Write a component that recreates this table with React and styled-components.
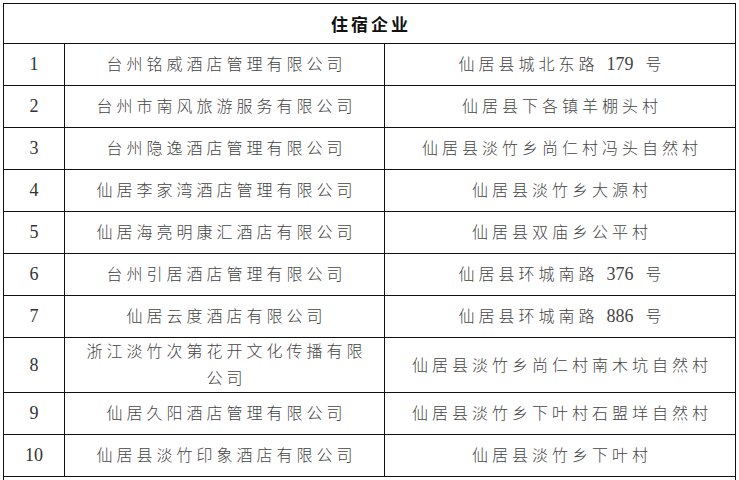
import React from "react";
import styled, { createGlobalStyle } from "styled-components";

const GlobalStyle = createGlobalStyle`
	html, body {
		margin: 0;
		padding: 0;
		background: #ffffff;
		overflow: hidden;
	}
	body {
		font-family: "Liberation Serif", "Noto Sans CJK SC", serif;
	}
`;

const companies = [
	{ name: "台州铭威酒店管理有限公司", address: "仙居县城北东路 179 号" },
	{ name: "台州市南风旅游服务有限公司", address: "仙居县下各镇羊棚头村" },
	{ name: "台州隐逸酒店管理有限公司", address: "仙居县淡竹乡尚仁村冯头自然村" },
	{ name: "仙居李家湾酒店管理有限公司", address: "仙居县淡竹乡大源村" },
	{ name: "仙居海亮明康汇酒店有限公司", address: "仙居县双庙乡公平村" },
	{ name: "台州引居酒店管理有限公司", address: "仙居县环城南路 376 号" },
	{ name: "仙居云度酒店有限公司", address: "仙居县环城南路 886 号" },
	{ name: "浙江淡竹次第花开文化传播有限公司", address: "仙居县淡竹乡尚仁村南木坑自然村" },
	{ name: "仙居久阳酒店管理有限公司", address: "仙居县淡竹乡下叶村石盟垟自然村" },
	{ name: "仙居县淡竹印象酒店有限公司", address: "仙居县淡竹乡下叶村" },
];

// digits in the text are set tight, like the source document
const withNumbers = (text) =>
	text.split(/(\d+)/).map((part, i) =>
		/^\d+$/.test(part) ? <Digits key={i}>{part}</Digits> : part
	);

const App = () => {
	return (
		<Page>
			<GlobalStyle />
			<Table>
				<colgroup>
					<col style={{ width: 61 }} />
					<col style={{ width: 320 }} />
					<col style={{ width: 351 }} />
				</colgroup>
				<tbody>
					<tr>
						<HeaderCell colSpan={3}>住宿企业</HeaderCell>
					</tr>
					{companies.map((c, i) => (
						<tr key={i}>
							<NumberCell>{i + 1}</NumberCell>
							<TextCell>{c.name}</TextCell>
							<TextCell>{withNumbers(c.address)}</TextCell>
						</tr>
					))}
					<tr>
						<TailCell colSpan={3} />
					</tr>
				</tbody>
			</Table>
		</Page>
	);
};

const Page = styled.div`
	padding: 3px 0 0 3px;
`;

const Table = styled.table`
	border-collapse: collapse;
	table-layout: fixed;
	width: 733px;
	td {
		border: 1.3px solid #111;
		padding: 0;
		text-align: center;
		vertical-align: middle;
	}
`;

const HeaderCell = styled.td`
	height: 39px;
	font-family: "Noto Sans CJK SC", sans-serif;
	font-weight: 700;
	font-size: 17px;
	letter-spacing: 3px;
	color: #111;
	padding-left: 3px !important;
`;

const NumberCell = styled.td`
	height: 41px;
	font-size: 18px;
	color: #333;
`;

const TextCell = styled.td`
	height: 41px;
	padding: 0 12px 0 16px !important;
	font-size: 16px;
	letter-spacing: 4px;
	line-height: 27px;
	color: #444;
	font-weight: 300;
`;

const Digits = styled.span`
	letter-spacing: 0;
	font-size: 18px;
	margin-right: 4px;
`;

const TailCell = styled.td`
	height: 30px;
`;

export default App;
